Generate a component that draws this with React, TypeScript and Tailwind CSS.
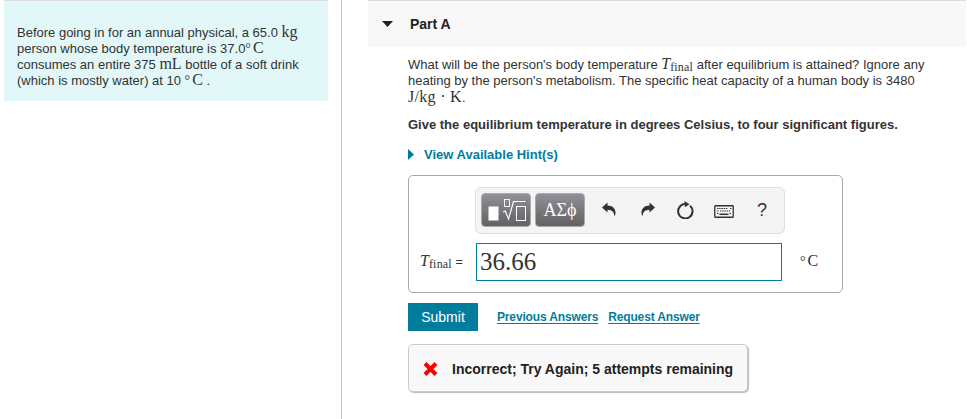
import React from 'react';

const serif = "font-['Liberation_Serif',serif]";

function Final() {
  return (
    <span className={`${serif} tracking-normal`}>
      <i className="text-[16px] leading-none">T</i>
      <span className="relative top-[2px] text-[12px] leading-none tracking-[0.2px]">final</span>
    </span>
  );
}

function Unit({ children }: { children: React.ReactNode }) {
  return <span className={`${serif} text-[16px] leading-none tracking-normal`}>{children}</span>;
}

function Celsius() {
  return (
    <span className={`${serif} text-[16px] leading-none tracking-normal`}>
      <span className="mr-[2px] text-[14px]">°</span>C
    </span>
  );
}

function Problem() {
  return (
    <aside className="h-[419px] w-[342px] shrink-0 border-r border-[#b4c6d4] pl-1">
      <div className="h-[101px] w-[324px] border-t border-[#dcdcdc] bg-[#e1f7f8] pl-[13px] pt-[23px] text-[13px] leading-[16px]">
        <p className="h-4 whitespace-nowrap">Before going in for an annual physical, a 65.0 <Unit>kg</Unit></p>
        <p className="h-4 whitespace-nowrap">person whose body temperature is 37.0<Celsius /></p>
        <p className="h-4 whitespace-nowrap">consumes an entire 375 <Unit>mL</Unit> bottle of a soft drink</p>
        <p className="h-4 whitespace-nowrap">(which is mostly water) at 10 <Celsius /> .</p>
      </div>
    </aside>
  );
}

function Toolbar() {
  return (
    <div className="ml-[66px] flex h-[47px] w-[310px] items-center rounded-[6px] border border-[#dedede] bg-[#f4f4f4] pb-[2px] pl-[5px] text-[#333]">
      <button className="flex h-[34px] w-[50px] items-center justify-center rounded-[4px] border border-[#aaa] bg-linear-to-b from-[#92909a] to-[#626262]">
        <svg width="48" height="32" viewBox="0 0 48 32" fill="none" stroke="#fff">
          <rect x="6.500" y="12.500" width="10" height="14" fill="#fff" stroke="none" />
          <rect x="22.500" y="5.500" width="5" height="7" strokeWidth=".9" />
          <path d="M21 18l2.300-1 3.200 8L31.500 7.500h12" strokeWidth="1.200" />
          <rect x="34.500" y="12.500" width="9" height="14" />
        </svg>
      </button>
      <button className={`ml-1 flex h-[34px] w-[50px] items-center justify-center rounded-[4px] border border-[#aaa] bg-linear-to-b from-[#92909a] to-[#626262] text-[18px] text-white ${serif}`}>
        ΑΣϕ
      </button>
      <svg className="ml-[17px]" width="14" height="15" viewBox="0 0 14 14" fill="currentColor">
        <path d="M0 5L5.500 0v3C10.500 3 14 6 13.500 11.500L12.200 14C12.500 9.500 10 7.500 5.500 7.300V10z" />
      </svg>
      <svg className="ml-[25px]" width="14" height="15" viewBox="0 0 14 14" fill="currentColor">
        <path d="M14 5L8.500 0v3C3.500 3 0 6 .5 11.500L1.800 14C1.500 9.500 4 7.500 8.500 7.300V10z" />
      </svg>
      <svg className="ml-[22px]" width="17" height="18" viewBox="0 0 17 18" fill="none" stroke="currentColor">
        <path d="M13 4.700A7.200 7.200 0 1 1 8.500 3" strokeWidth="2" />
        <path d="M7.500 0l5 3.200-4.500 3.100z" fill="currentColor" stroke="none" />
      </svg>
      <svg className="ml-5 mt-[4px]" width="20" height="13" viewBox="0 0 20 13" fill="none" stroke="currentColor">
        <rect x=".75" y=".75" width="18.500" height="11.500" rx=".7" strokeWidth="1.300" />
        <path d="M3 3.500h11M16 3.500h1.500M3 6h1.500M6 6h10M3 8.500h1.500M15.500 8.500h2" strokeDasharray="1.500 .7" strokeWidth="1.200" />
        <path d="M5.500 9.300h9" strokeWidth="1.500" />
      </svg>
      <span className="ml-[23px] text-[18px]">?</span>
    </div>
  );
}

function Answer() {
  return (
    <div className="mt-[12px] h-[118px] w-[435px] rounded-[5px] border border-[#a9a9a9] pt-[11px]">
      <Toolbar />
      <div className="mt-[9px] flex h-[38px] items-center">
        <div className="w-[67px] whitespace-nowrap pb-px pl-[11px] text-[12.5px]"><Final /> =</div>
        <div className={`h-[38px] w-[306px] border border-[#007d9d] pl-[3px] text-[25px] leading-[36px] ${serif}`}>36.66</div>
        <div className="ml-[18px] pb-[2px] text-[13px]"><Celsius /></div>
      </div>
    </div>
  );
}

export default function App() {
  return (
    <div className="flex h-[419px] w-[967px] overflow-hidden bg-white font-['Liberation_Sans',Arial,sans-serif] text-[#333]">
      <Problem />
      <main className="ml-[26px] w-[598px]">
        <header className="flex h-[47px] items-center border-t border-[#dcdcdc] bg-[#f8f8f8] pl-[14px] text-[#222]">
          <svg width="11" height="6" viewBox="0 0 11 6" fill="currentColor"><path d="M0 0h11L5.500 6z" /></svg>
          <h1 className="ml-[17px] text-[14px] font-bold">Part A</h1>
        </header>
        <section className="pl-10 pt-[9px] text-[13px] leading-[16px]">
          <p className="h-4 whitespace-nowrap">What will be the person's body temperature <Final /> after equilibrium is attained? Ignore any</p>
          <p className="mt-px h-4 whitespace-nowrap">heating by the person's metabolism. The specific heat capacity of a human body is 3480</p>
          <p className="h-4 whitespace-nowrap"><Unit><span className="tracking-[0.3px]">J/kg · K</span></Unit>.</p>
          <p className="mt-3 h-4 whitespace-nowrap font-bold">Give the equilibrium temperature in degrees Celsius, to four significant figures.</p>
          <div className="mt-[14px] flex h-4 items-center text-[#007d9d]">
            <svg className="mb-[2px]" width="6" height="11" viewBox="0 0 6 11" fill="currentColor"><path d="M0 0l6 5.500L0 11z" /></svg>
            <b className="ml-[10px] whitespace-nowrap">View Available Hint(s)</b>
          </div>
          <Answer />
          <div className="mt-[10px] flex h-[28px] items-center">
            <button className="h-[28px] w-[70px] bg-[#007d9d] text-[14px] text-white">Submit</button>
            <a className="ml-[19px] whitespace-nowrap text-[12px] font-bold tracking-[-0.15px] text-[#007d9d] underline underline-offset-2">Previous Answers</a>
            <a className="ml-[10px] whitespace-nowrap text-[12px] font-bold tracking-[-0.15px] text-[#007d9d] underline underline-offset-2">Request Answer</a>
          </div>
          <div className="mt-[13px] flex h-[48px] w-[340px] items-center rounded-[5px] border border-[#c9c9c9] bg-[#f8f8f8] pl-[14px] text-[#222] shadow-[1px_1px_1px_#bbb]">
            <svg className="mt-px" width="15" height="14" viewBox="0 0 15 14" stroke="#f00" strokeWidth="4" fill="none"><path d="M2 1.500l11 11M13 1.500l-11 11" /></svg>
            <b className="ml-[14px] mt-[2px] whitespace-nowrap text-[14px]">Incorrect; Try Again; 5 attempts remaining</b>
          </div>
        </section>
      </main>
    </div>
  );
}
